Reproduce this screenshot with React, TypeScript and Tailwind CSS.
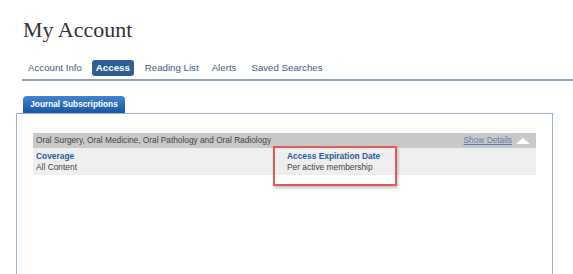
import React from "react";

const navItems = [
  { label: "Account Info", cls: "ml-px" },
  { label: "Access", cls: "" },
  { label: "Reading List", cls: "ml-px" },
  { label: "Alerts", cls: "ml-[3px]" },
  { label: "Saved Searches", cls: "ml-[5px]" },
];

export default function App() {
  return (
    <div className="h-[274px] w-full overflow-hidden bg-white font-['Liberation_Sans',Arial,sans-serif]">
      <h1 className="pl-[23px] pt-[19px] font-['Liberation_Serif',Georgia,serif] text-[22px] leading-[22px] text-[#333]">
        My Account
      </h1>

      {/* top tabs */}
      <nav className="ml-[22px] mt-[19px] flex items-center gap-[10px] border-b-2 border-[#8ba3b9] pb-[3px] pl-[5px] text-[9.7px]">
        {navItems.map((item) =>
          item.label === "Access" ? (
            <span
              key={item.label}
              className="flex h-[16px] items-center rounded-[3px] bg-[#2f5f92] px-[4px] font-bold text-white"
            >
              {item.label}
            </span>
          ) : (
            <span key={item.label} className={`${item.cls} leading-[16px] text-[#40607f]`}>
              {item.label}
            </span>
          )
        )}
      </nav>

      <div className="ml-[16px] mt-[15px] w-[537px]">
        <div className="ml-[7px] flex h-[17px] w-[102px] items-center justify-center rounded-t-[4px] bg-gradient-to-b from-[#4285cc] to-[#1657a5] text-[8.3px] font-bold text-white">
          Journal Subscriptions
        </div>
        <div className="h-[180px] border border-[#9db3cb] px-[16px] pt-[19px]">
          <div className="relative">
            <div className="flex h-[15px] items-center justify-between bg-[#c9c9c9] pl-[3px] pr-[6px] text-[8.3px] text-[#444]">
              <span>Oral Surgery, Oral Medicine, Oral Pathology and Oral Radiology</span>
              <span className="flex items-center gap-[4px]">
                <span className="text-[#5d7cab] underline">Show Details</span>
                <span className="h-0 w-0 border-x-[7px] border-b-[6px] border-x-transparent border-b-white" />
              </span>
            </div>
            <div className="grid h-[27px] grid-cols-2 bg-[#eeeeee] pl-[3px] pt-[3px] text-[8.4px] leading-[11px]">
              <div>
                <div className="font-bold text-[#2b5c97]">Coverage</div>
                <div className="text-[#444]">All Content</div>
              </div>
              <div className="pl-[1px]">
                <div className="font-bold text-[#2b5c97]">Access Expiration Date</div>
                <div className="text-[#444]">Per active membership</div>
              </div>
            </div>
            {/* highlight box */}
            <div className="absolute left-[240px] top-[13px] h-[40px] w-[124px] border-2 border-[#e15a5a] shadow-[1px_2px_3px_rgba(0,0,0,0.25)]" />
          </div>
        </div>
      </div>
    </div>
  );
}
